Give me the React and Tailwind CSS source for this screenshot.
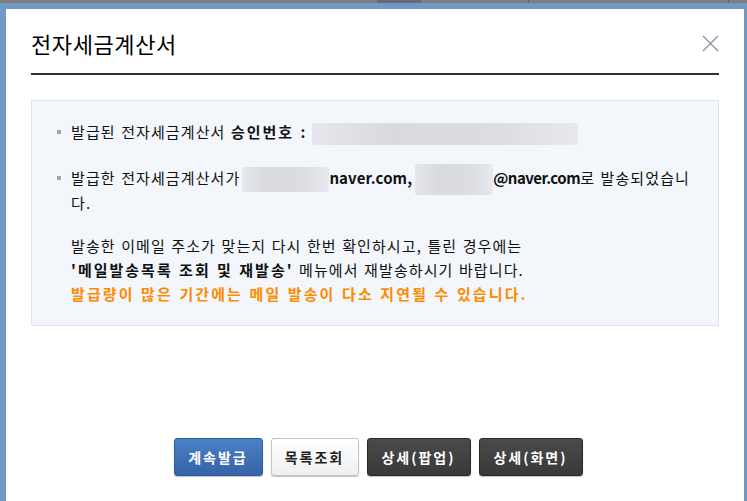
import React from 'react';

const KR = { fontFamily: '"Noto Sans CJK KR", "Noto Sans", sans-serif' };

// blurred (masked) value placeholder
const Masked = ({ className }) => (
  <span
    className={`inline-block align-middle rounded-[2px] bg-[linear-gradient(90deg,#e6e7ec,#d9dae0_30%,#dcdde2_70%,#e8e9ee)] ${className}`}
  />
);

const Bullet = () => <span className="mt-[10px] h-[4px] w-[4px] shrink-0 bg-[#a5a5a5]" />;

const Btn = ({ kind, children }) => {
  const styles = {
    blue: 'w-[89px] border-[#2f5b9e] bg-[linear-gradient(#4c80c5,#3563a9)] text-white',
    white: 'w-[88px] border-[#c4c4c4] bg-[linear-gradient(#ffffff,#efefef)] text-[#1e1e1e]',
    dark: 'w-[104px] border-[#2a2a2a] bg-[linear-gradient(#4a4a4a,#383838)] text-white',
  };
  return (
    <button
      className={`h-[38px] rounded-[3px] border text-[14px] font-bold tracking-[2px] shadow-[0_1px_1px_rgba(0,0,0,0.25)] ${styles[kind]}`}
      style={KR}
    >
      {children}
    </button>
  );
};

export default function App() {
  return (
    <div className="flex h-[501px] w-[747px] flex-col overflow-hidden bg-[#7298c4]" style={KR}>
      {/* strip of the page behind the dialog */}
      <div className="flex h-[3px] bg-[#7f7f7f]">
        <div className="w-[102px]" />
        <div className="w-[1px] bg-[#8c6c6c]" />
        <div className="w-[94px]" />
        <div className="w-[1px] bg-[#8c6c6c]" />
        <div className="w-[179px]" />
        <div className="w-[44px] bg-[#626b7e]" />
        <div className="w-[107px]" />
        <div className="w-[1px] bg-[#5e5e5e]" />
        <div className="w-[199px]" />
        <div className="w-[1px] bg-[#5e5e5e]" />
      </div>

      <div className="flex flex-1 pl-[6px] pr-[3px] pt-[6px]">
        <div className="flex flex-1 flex-col bg-white px-[25px]">
          {/* header */}
          <div className="flex h-[66px] items-end justify-between border-b-2 border-[#333333] pb-[16px]">
            <h1 className="text-[22px] leading-[28px] tracking-[0.6px] text-black">전자세금계산서</h1>
            <svg width="17" height="17" viewBox="0 0 17 17" className="mb-[5px]">
              <path d="M1 1 L16 16 M16 1 L1 16" stroke="#8a8fa6" strokeWidth="1.3" />
            </svg>
          </div>

          {/* message box */}
          <div className="mt-[25px] border border-[#dde4ee] bg-[#f3f6fb] pb-[19px] pl-[25px] pr-[8px] pt-[19px] text-[15px] leading-[24px] tracking-[1.1px] text-[#111] [word-spacing:1px]">
            <div className="flex gap-[10px]">
              <Bullet />
              <div>
                발급된 전자세금계산서 <b className="tracking-[2px]">승인번호 :</b>
                <Masked className="-my-[2px] ml-[5px] h-[22px] w-[266px]" />
              </div>
            </div>

            <div className="mt-[22px] flex gap-[10px]">
              <Bullet />
              <div>
                <div className="whitespace-nowrap">
                  발급한 전자세금계산서가
                  <Masked className="-my-[2px] ml-[2px] h-[25px] w-[87px]" />
                  <b className="tracking-[0.1px]">naver.com,</b>
                  <Masked className="-my-[4px] ml-[3px] h-[31px] w-[78px]" />
                  <b className="tracking-[-0.5px]">@naver.com</b>로 발송되었습니
                </div>
                <div>다.</div>
                <div className="mt-[19px]">발송한 이메일 주소가 맞는지 다시 한번 확인하시고, 틀린 경우에는</div>
                <div>
                  <b className="tracking-[2px]">'메일발송목록 조회 및 재발송'</b> 메뉴에서 재발송하시기 바랍니다.
                </div>
                <div className="font-bold tracking-[2.1px] text-[#ff8a00]">
                  발급량이 많은 기간에는 메일 발송이 다소 지연될 수 있습니다.
                </div>
              </div>
            </div>
          </div>

          {/* actions */}
          <div className="mt-[112px] flex justify-center gap-[8px] pl-[6px]">
            <Btn kind="blue">계속발급</Btn>
            <Btn kind="white">목록조회</Btn>
            <Btn kind="dark">상세(팝업)</Btn>
            <Btn kind="dark">상세(화면)</Btn>
          </div>
        </div>
      </div>
    </div>
  );
}
